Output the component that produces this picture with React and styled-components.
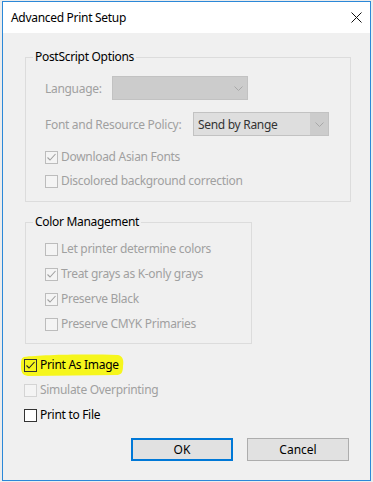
import React from "react";
import styled, { createGlobalStyle } from "styled-components";

const Global = createGlobalStyle`
  body {
    margin: 0;
    background: #ececec;
    font-family: "Noto Sans", "Open Sans", "DejaVu Sans", sans-serif;
    font-size: 12px;
    letter-spacing: -0.3px;
  }
  * { box-sizing: border-box; }
`;

const Window = styled.div`
  margin: 1px 0 0 2px;
  width: 369px;
  border: 1px solid #2b88d8;
  background: #f0f0f0;
  display: flex;
  flex-direction: column;
`;

const TitleBar = styled.div`
  height: 31px;
  background: #fff;
  display: flex;
  align-items: center;
  justify-content: space-between;
  padding: 0 8px 1px 8px;
  color: #000;
  font-size: 12px;
`;

const Body = styled.div`
  display: flex;
  flex-direction: column;
  padding: 16px 21px 19px 21px;
`;

const Group = styled.fieldset`
  margin: ${(p) => p.$top || 0}px 0 0 1px;
  width: ${(p) => p.$width}px;
  border: 1px solid #dcdcdc;
  padding: 11px 19px ${(p) => p.$bottom}px 19px;
  display: flex;
  flex-direction: column;
  gap: ${(p) => p.$gap}px;
`;

const Legend = styled.legend`
  margin-left: -12px;
  padding: 0 2px;
  line-height: 16px;
  color: #000;
`;

const FieldRow = styled.div`
  display: flex;
  align-items: center;
  height: 24px;
  margin-bottom: ${(p) => p.$after || 0}px;
`;

const FieldLabel = styled.span`
  width: ${(p) => p.$width}px;
  color: #a0a0a0;
`;

const Combo = styled.div`
  width: 136px;
  height: 24px;
  border: 1px solid #c2c2c2;
  background: ${(p) => (p.$value ? "#dedede" : "#cccccc")};
  display: flex;
  align-items: center;
  color: #333;
`;

const ComboText = styled.span`
  flex: 1;
  padding-left: 4px;
`;

const ComboArrow = styled.div`
  width: 18px;
  height: 100%;
  background: #cccccc;
  display: flex;
  align-items: center;
  justify-content: center;
`;

const CheckRow = styled.label`
  position: relative;
  display: flex;
  align-items: center;
  height: 16px;
  gap: 3px;
  color: ${(p) => (p.$disabled ? "#a0a0a0" : "#000")};
`;

const Box = styled.span`
  position: relative;
  width: 13px;
  height: 13px;
  border: 1px solid ${(p) => p.$border};
  background: ${(p) => p.$bg};
  display: flex;
  align-items: center;
  justify-content: center;
`;

const CheckText = styled.span`
  position: relative;
  line-height: 16px;
`;

const Highlight = styled.svg`
  position: absolute;
  left: -4px;
  top: -4px;
`;

const Loose = styled.div`
  display: flex;
  flex-direction: column;
  gap: 9px;
  margin-top: 13px;
`;

const Buttons = styled.div`
  display: flex;
  justify-content: flex-end;
  gap: 14px;
  margin-top: 15px;
`;

const Button = styled.button`
  width: 102px;
  height: 23px;
  background: #e1e1e1;
  border: ${(p) => (p.$default ? "2px solid #0078d7" : "1px solid #adadad")};
  font: inherit;
  color: #000;
  padding: 0;
`;

const Chevron = ({ color = "#a8a8a8" }) => (
  <svg width="9" height="5" viewBox="0 0 9 5">
    <polyline points="0.5,0.5 4.5,4.5 8.5,0.5" fill="none" stroke={color} strokeWidth="1" />
  </svg>
);

const Check = ({ checked, disabled, faint, highlight, plain, children }) => {
  let border = disabled ? (faint ? "#d4d4d4" : "#bcbcbc") : "#333";
  let bg = disabled ? "#f4f4f4" : plain ? "#fff" : "transparent";
  const mark = disabled ? "#a0a0a0" : "#222";
  return (
    <CheckRow $disabled={disabled}>
      {highlight && (
        <Highlight width="104" height="25" viewBox="0 0 104 25">
          <path
            d="M4,4 C20,2 60,1 98,2 C103,3 104,8 103,13 C103,20 101,22 96,22 L10,23 C4,23 1,21 1,14 C1,8 1,5 4,4 Z"
            fill="#f6f61c"
          />
        </Highlight>
      )}
      <Box $border={border} $bg={bg}>
        {checked && (
          <svg width="11" height="11" viewBox="0 0 11 11">
            <polyline points="1.5,5.5 4,8 9.5,2" fill="none" stroke={mark} strokeWidth="1.1" />
          </svg>
        )}
      </Box>
      <CheckText>{children}</CheckText>
    </CheckRow>
  );
};

export default function App() {
  return (
    <>
      <Global />
      <Window>
        <TitleBar>
          <span>Advanced Print Setup</span>
          <svg width="11" height="11" viewBox="0 0 11 11">
            <path d="M0.5,0.5 L10.5,10.5 M10.5,0.5 L0.5,10.5" stroke="#111" strokeWidth="1" />
          </svg>
        </TitleBar>
        <Body>
          <Group $width={326} $bottom={12} $gap={8}>
            <Legend>PostScript Options</Legend>
            <FieldRow $after={4}>
              <FieldLabel $width={67}>Language:</FieldLabel>
              <Combo>
                <ComboText />
                <ComboArrow>
                  <Chevron />
                </ComboArrow>
              </Combo>
            </FieldRow>
            <FieldRow $after={5}>
              <FieldLabel $width={148}>Font and Resource Policy:</FieldLabel>
              <Combo $value>
                <ComboText>Send by Range</ComboText>
                <ComboArrow>
                  <Chevron />
                </ComboArrow>
              </Combo>
            </FieldRow>
            <Check checked disabled>Download Asian Fonts</Check>
            <Check disabled>Discolored background correction</Check>
          </Group>
          <Group $top={12} $width={227} $bottom={11} $gap={9}>
            <Legend>Color Management</Legend>
            <Check disabled>Let printer determine colors</Check>
            <Check checked disabled>Treat grays as K-only grays</Check>
            <Check checked disabled>Preserve Black</Check>
            <Check disabled>Preserve CMYK Primaries</Check>
          </Group>
          <Loose>
            <Check checked highlight>Print As Image</Check>
            <Check disabled faint>Simulate Overprinting</Check>
            <Check plain>Print to File</Check>
          </Loose>
          <Buttons>
            <Button $default>OK</Button>
            <Button>Cancel</Button>
          </Buttons>
        </Body>
      </Window>
    </>
  );
}
